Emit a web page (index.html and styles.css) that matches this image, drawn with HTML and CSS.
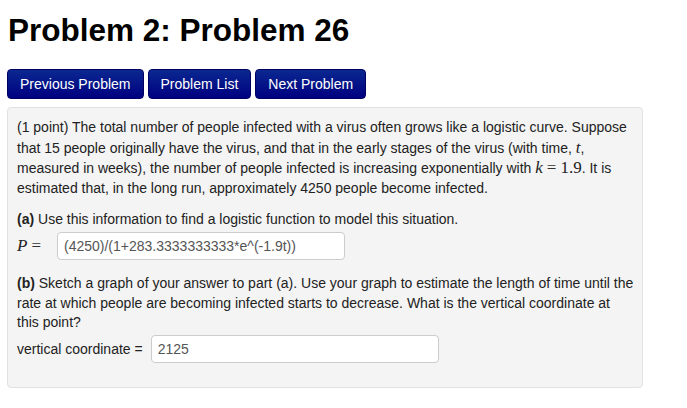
FILE: index.html
```html
<!DOCTYPE html>
<html>
<head>
<meta charset="utf-8">
<link rel="stylesheet" href="styles.css">
</head>
<body>
<h1 class="title">Problem 2: Problem 26</h1>
<div class="nav">
  <button class="btn">Previous Problem</button>
  <button class="btn">Problem List</button>
  <button class="btn">Next Problem</button>
</div>
<div class="panel">
  <p class="text">(1 point) The total number of people infected with a virus often grows like a logistic curve. Suppose that 15 people originally have the virus, and that in the early stages of the virus (with time, <span class="mi">t</span>, measured in weeks), the number of people infected is increasing exponentially with <span class="math"><span class="mi">k</span><span class="mo">=</span><span class="mn">1.9</span></span>. It is estimated that, in the long run, approximately 4250 people become infected.</p>
  <p class="text part-a"><b>(a)</b> Use this information to find a logistic function to model this situation.</p>
  <div class="row">
    <span class="math eq"><span class="mi">P</span><span class="mo">=</span></span>
    <input class="answer" type="text" value="(4250)/(1+283.3333333333*e^(-1.9t))">
  </div>
  <p class="text part-b"><b>(b)</b> Sketch a graph of your answer to part (a). Use your graph to estimate the length of time until the rate at which people are becoming infected starts to decrease. What is the vertical coordinate at this point?</p>
  <div class="row">
    <span class="label">vertical coordinate =</span>
    <input class="answer" type="text" value="2125">
  </div>
</div>
</body>
</html>
```
FILE: styles.css
```css
body {
  margin: 0;
  padding: 0 8px;
  font-family: "Liberation Sans", Arial, sans-serif;
  font-size: 14px;
  color: #222;
  background: #fff;
}
.title {
  font-size: 31.5px;
  font-weight: bold;
  color: #000;
  margin: 0;
  padding-top: 11px;
  line-height: 38px;
}
.nav {
  display: flex;
  gap: 4px;
  margin-top: 20px;
  margin-left: -1px;
}
.btn {
  height: 30px;
  padding: 0 12px;
  font-family: "Liberation Sans", Arial, sans-serif;
  font-size: 14px;
  color: #fff;
  background: linear-gradient(#0a2890, #000080);
  border: 1px solid #000060;
  border-radius: 4px;
}
.panel {
  margin-top: 8px;
  margin-left: -1px;
  width: 617px;
  background: #f4f4f4;
  border: 1px solid #e2e2e2;
  border-radius: 4px;
  padding: 10px 8px 24px 9px;
}
.text {
  margin: 0;
  line-height: 19.6px;
}
.part-a {
  margin-top: 12px;
}
.part-b {
  margin-top: 14px;
}
.row {
  display: flex;
  align-items: center;
  gap: 8px;
  margin-top: 2px;
}
.math {
  font-family: "Liberation Serif", "Times New Roman", serif;
  font-size: 17px;
  white-space: nowrap;
}
.mi {
  font-family: "Liberation Serif", "Times New Roman", serif;
  font-style: italic;
  font-size: 17px;
}
.mo {
  color: #333;
  margin: 0 4px;
}
.mn {
  font-size: 17px;
}
.eq {
  width: 32px;
}
.answer {
  height: 28px;
  box-sizing: border-box;
  padding: 3px 6px;
  font-family: "Liberation Sans", Arial, sans-serif;
  font-size: 14px;
  color: #555;
  background: #fff;
  border: 1px solid #ccc;
  border-radius: 4px;
  width: 288px;
}
.label {
  color: #222;
}
```
